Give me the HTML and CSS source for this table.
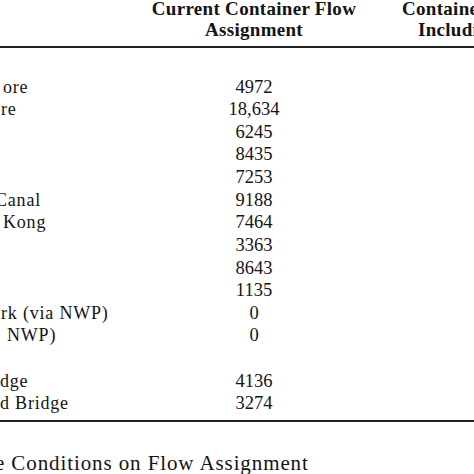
FILE: index.html
```html
<!DOCTYPE html>
<html>
<head>
<meta charset="utf-8">
<link rel="stylesheet" href="styles.css">
</head>
<body>
<div class="table">
  <div class="head">
    <div class="hcell"></div>
    <div class="hcell center"><span class="hline first">Current Container Flow</span><span class="hline second">Assignment</span></div>
    <div class="hcell third"><span class="hline first">Container Flow</span><span class="hline second indent">Including</span></div>
  </div>
  <div class="body">
    <div class="row"><div class="lbl"></div><div class="num"></div><div></div></div>
    <div class="row"><div class="lbl in3">ore</div><div class="num">4972</div><div></div></div>
    <div class="row"><div class="lbl in1">re</div><div class="num">18,634</div><div></div></div>
    <div class="row"><div class="lbl"></div><div class="num">6245</div><div></div></div>
    <div class="row"><div class="lbl"></div><div class="num">8435</div><div></div></div>
    <div class="row"><div class="lbl"></div><div class="num">7253</div><div></div></div>
    <div class="row"><div class="lbl cut">Canal</div><div class="num">9188</div><div></div></div>
    <div class="row"><div class="lbl in3">Kong</div><div class="num">7464</div><div></div></div>
    <div class="row"><div class="lbl"></div><div class="num">3363</div><div></div></div>
    <div class="row"><div class="lbl"></div><div class="num">8643</div><div></div></div>
    <div class="row"><div class="lbl"></div><div class="num">1135</div><div></div></div>
    <div class="row"><div class="lbl in1">rk (via NWP)</div><div class="num">0</div><div></div></div>
    <div class="row"><div class="lbl in7">NWP)</div><div class="num">0</div><div></div></div>
    <div class="row"><div class="lbl"></div><div class="num"></div><div></div></div>
    <div class="row"><div class="lbl">dge</div><div class="num">4136</div><div></div></div>
    <div class="row"><div class="lbl">d Bridge</div><div class="num">3274</div><div></div></div>
  </div>
</div>
<p class="caption">e Conditions on Flow Assignment</p>
</body>
</html>
```
FILE: styles.css
```css
html, body {
  margin: 0;
  padding: 0;
  background: #ffffff;
}
body {
  width: 474px;
  height: 474px;
  overflow: hidden;
  font-family: "Liberation Serif", "Times New Roman", serif;
  color: #141414;
}
.head, .row {
  display: grid;
  grid-template-columns: 150px 208px 1fr;
}
.head {
  padding-bottom: 3.7px;
  border-bottom: 2px solid #222;
}
.hcell {
  font-weight: bold;
  font-size: 19px;
  letter-spacing: 0.3px;
  white-space: nowrap;
}
.hline {
  display: block;
}
.first {
  line-height: 17px;
}
.second {
  line-height: 25px;
}
.center {
  text-align: center;
}
.third {
  padding-left: 44px;
}
.indent {
  padding-left: 16px;
}
.body {
  padding-top: 5.3px;
  padding-bottom: 4.8px;
  border-bottom: 2px solid #222;
}
.row {
  height: 22.64px;
  font-size: 18px;
  line-height: 22.64px;
  white-space: nowrap;
}
.lbl {
  letter-spacing: 0.8px;
  overflow: hidden;
}
.in1 { padding-left: 1px; }
.in3 { padding-left: 3px; }
.in7 { padding-left: 7px; }
.cut { text-indent: -5px; }
.num {
  font-size: 18.5px;
  text-align: center;
}
.caption {
  margin: 28.9px 0 0 0;
  font-size: 21px;
  line-height: 24px;
  letter-spacing: 0.9px;
  text-indent: -5px;
  white-space: nowrap;
}
```
